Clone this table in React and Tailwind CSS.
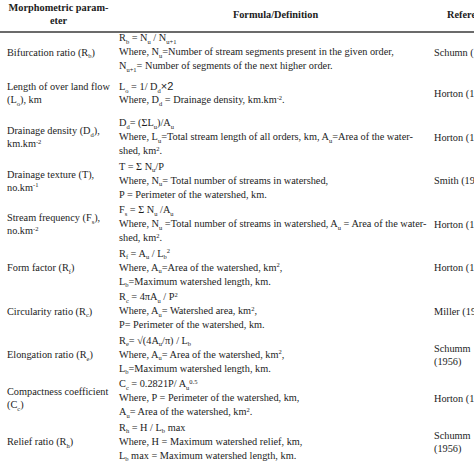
const S = ({ children }) => (
  <sub className="text-[6.5px] bottom-[-2.5px]">{children}</sub>
);
const P = ({ children }) => (
  <sup className="text-[6.5px] top-[-3.5px]">{children}</sup>
);

const ROWS = [
  {
    mt: "-mt-[2px]",
    label: [<>Bifurcation ratio (R<S>b</S>)</>],
    lines: [
      <>R<S>b</S> = N<S>u</S> / N<S>u+1</S></>,
      <>Where, N<S>u</S>=Number of stream segments present in the given order,</>,
      <>N<S>u+1</S>= Number of segments of the next higher order.</>,
    ],
    ref: ["Schumn (1956)"],
  },
  {
    mt: "mt-[6px]",
    label: ["Length of over land flow", <>(L<S>o</S>), km</>],
    lines: [
      <>L<S>o</S> = 1/ D<S>d</S><span className="font-['Liberation_Sans'] text-[11px]">×2</span></>,
      <>Where, D<S>d</S> = Drainage density, km.km<P>-2</P>.</>,
    ],
    ref: ["Horton (1945)"],
  },
  {
    mt: "mt-[9px]",
    label: [<>Drainage density (D<S>d</S>),</>, <>km.km<P>-2</P></>],
    lines: [
      <>D<S>d</S>= (ΣL<S>u</S>)/A<S>u</S></>,
      <>Where, L<S>u</S>=Total stream length of all orders, km, A<S>u</S>=Area of the water-</>,
      <>shed, km<P>2</P>.</>,
    ],
    ref: ["Horton (1932)"],
  },
  {
    mt: "mt-[1.5px]",
    label: ["Drainage texture (T),", <>no.km<P>-1</P></>],
    lines: [
      <>T = Σ N<S>u</S>/P</>,
      <>Where, N<S>u</S>=  Total number of streams in watershed,</>,
      <>P = Perimeter of the watershed, km.</>,
    ],
    ref: ["Smith (1950)"],
  },
  {
    mt: "mt-[1.5px]",
    label: [<>Stream frequency (F<S>s</S>),</>, <>no.km<P>-2</P></>],
    lines: [
      <>F<S>s</S> = Σ N<S>u</S> /A<S>u</S></>,
      <>Where, N<S>u</S> =Total number of streams in watershed, A<S>u</S> =  Area of the water-</>,
      <>shed, km<P>2</P>.</>,
    ],
    ref: ["Horton (1932)"],
  },
  {
    mt: "mt-[1.5px]",
    label: [<>Form factor (R<S>f</S>)</>],
    lines: [
      <>R<S>f</S> = A<S>u</S> / L<S>b</S><P>2</P></>,
      <>Where, A<S>u</S>=Area of the watershed, km<P>2</P>,</>,
      <>L<S>b</S>=Maximum watershed length, km.</>,
    ],
    ref: ["Horton (1932)"],
  },
  {
    mt: "mt-[1.5px]",
    label: [<>Circularity ratio (R<S>c</S>)</>],
    lines: [
      <>R<S>c</S> = 4πA<S>u</S> / P<P>2</P></>,
      <>Where, A<S>u</S>= Watershed area, km<P>2</P>,</>,
      <>P= Perimeter of the watershed, km.</>,
    ],
    ref: ["Miller (1953)"],
  },
  {
    mt: "mt-[1.5px]",
    label: [<>Elongation ratio (R<S>e</S>)</>],
    lines: [
      <>R<S>e</S>= √(4A<S>u</S>/π) / L<S>b</S></>,
      <>Where, A<S>u</S>= Area of the watershed, km<P>2</P>,</>,
      <>L<S>b</S>=Maximum watershed length, km.</>,
    ],
    ref: ["Schumm", "(1956)"],
  },
  {
    mt: "mt-[1.5px]",
    label: ["Compactness coefficient", <>(C<S>c</S>)</>],
    lines: [
      <>C<S>c</S> = 0.2821P/ A<S>u</S><P>0.5</P></>,
      <>Where, P =  Perimeter of the watershed, km,</>,
      <>A<S>u</S>= Area of the watershed, km<P>2</P>.</>,
    ],
    ref: ["Horton (1945)"],
  },
  {
    mt: "mt-[1.5px]",
    label: [<>Relief ratio (R<S>h</S>)</>],
    lines: [
      <>R<S>h</S> = H / L<S>b</S> max</>,
      <>Where, H = Maximum watershed relief, km,</>,
      <>L<S>b</S> max = Maximum watershed length, km.</>,
    ],
    ref: ["Schumm", "(1956)"],
  },
];

export default function App() {
  return (
    <div className="w-[474px] h-[474px] overflow-hidden bg-white text-[#1c1c1c] font-['Liberation_Serif',serif] text-[10.3px]">
      <div className="w-[504px]">
        <div className="grid grid-cols-[117px_317px_70px] items-center h-[33px] border-b-2 border-[#6b6b6b] font-bold leading-[13px] pb-[3px]">
          <div className="text-center whitespace-nowrap">
            Morphometric param-
            <br />
            eter
          </div>
          <div className="text-center">Formula/Definition</div>
          <div className="text-center">Reference</div>
        </div>

        {ROWS.map((row, i) => (
          <div
            key={i}
            className={`grid grid-cols-[117px_317px_70px] items-center ${row.mt}`}
          >
            <div className="pl-[7px] leading-[13px] whitespace-nowrap">
              {row.label.map((l, j) => (
                <div key={j}>{l}</div>
              ))}
            </div>
            <div className="pl-[2px] whitespace-nowrap">
              {row.lines.map((l, j) => (
                <div key={j} className="h-[14px] leading-[14px]">
                  {l}
                </div>
              ))}
            </div>
            <div className="leading-[13px] whitespace-nowrap">
              {row.ref.map((r, j) => (
                <div key={j}>{r}</div>
              ))}
            </div>
          </div>
        ))}
      </div>
    </div>
  );
}
